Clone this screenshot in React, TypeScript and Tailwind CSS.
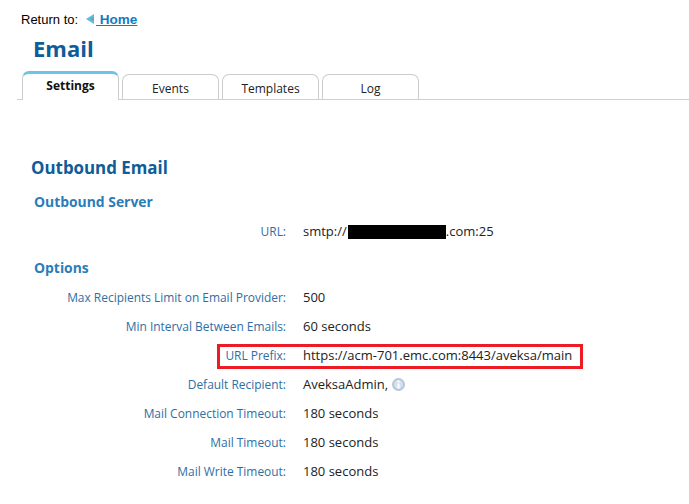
import React from 'react';

const tabs = ['Events', 'Templates', 'Log'];

const Row = ({ label, children }: { label: string; children: React.ReactNode }) => (
  <div className="flex h-[29px] items-center">
    <div className="w-[286px] shrink-0 text-right text-[11.95px] text-[#2f6ea5]">{label}</div>
    <div className="ml-[17px] flex items-center text-[13px] text-[#222222]">{children}</div>
  </div>
);

const App: React.FC = () => {
  return (
    <div className="h-[504px] w-[689px] overflow-hidden bg-white font-['Open_Sans',sans-serif]">
      <div className="flex h-[25px] items-end pl-[21px] font-['Liberation_Sans',sans-serif] text-[13px] leading-none text-black">
        <span className="-mb-px">Return to:</span>
        <svg width="10" height="10" viewBox="0 0 10 10" className="ml-[7px] mb-px">
          <polygon points="9,0 9,10 1,5" fill="#5bbde0" />
          <polygon points="9,3 9,7 5,5" fill="#7a9bb0" />
        </svg>
        <a className="-mb-px ml-[1px] text-[13.5px] font-bold text-[#0f7dc2] underline"> &nbsp;Home</a>
      </div>

      <h1 className="ml-[33px] mt-[8px] text-[22px] font-bold leading-[30px] text-[#0e5c98]">Email</h1>

      <div className="ml-[17px] mt-[7px] flex h-[30px] items-end border-b border-[#d0d0d0] pl-[5px]">
        <div className="-mb-px flex h-[29px] w-[97px] items-start justify-center rounded-t-[7px] border-x border-t-[3px] border-x-[#cccccc] border-t-[#6cc4e8] bg-white pt-[3px] text-[12px] font-bold text-[#111111]">
          Settings
        </div>
        {tabs.map((t) => (
          <div
            key={t}
            className="ml-[3px] flex h-[25px] w-[97px] items-center justify-center rounded-t-[7px] border-x border-t border-[#cccccc] pt-[3px] text-[12px] text-[#222222]"
          >
            {t}
          </div>
        ))}
      </div>

      <h2 className="ml-[31px] mt-[54px] text-[16.9px] font-bold leading-[28px] text-[#0e5c98]">Outbound Email</h2>
      <h3 className="ml-[34px] mt-[10px] text-[13.9px] font-bold leading-[20px] text-[#2a7db8]">Outbound Server</h3>

      <div className="mt-[5px]">
        <Row label="URL:">
          smtp://
          <span className="ml-[1px] inline-block h-[14px] w-[98px] bg-black" />
          .com:25
        </Row>
      </div>

      <h3 className="ml-[34px] mt-[12px] text-[13.9px] font-bold leading-[20px] text-[#2a7db8]">Options</h3>

      <div className="mt-[5px]">
        <Row label="Max Recipients Limit on Email Provider:">500</Row>
        <Row label="Min Interval Between Emails:">60 seconds</Row>
        <div className="relative">
          <Row label="URL Prefix:">https://acm-701.emc.com:8443/aveksa/main</Row>
          <div className="absolute left-[217px] top-[3px] h-[25px] w-[366px] border-[3px] border-[#ed1c24]" />
        </div>
        <Row label="Default Recipient:">
          AveksaAdmin,
          <svg width="13" height="13" viewBox="0 0 13 13" className="ml-[4px]">
            <circle cx="6.5" cy="6.5" r="6.5" fill="#b4c6da" />
            <circle cx="6.5" cy="6.5" r="4.5" fill="#d5e0ec" />
            <rect x="5.5" y="2.5" width="2" height="2" fill="#ffffff" />
            <rect x="5.5" y="5.5" width="2" height="5" fill="#ffffff" />
          </svg>
        </Row>
        <Row label="Mail Connection Timeout:">180 seconds</Row>
        <Row label="Mail Timeout:">180 seconds</Row>
        <Row label="Mail Write Timeout:">180 seconds</Row>
      </div>
    </div>
  );
};

export default App;
